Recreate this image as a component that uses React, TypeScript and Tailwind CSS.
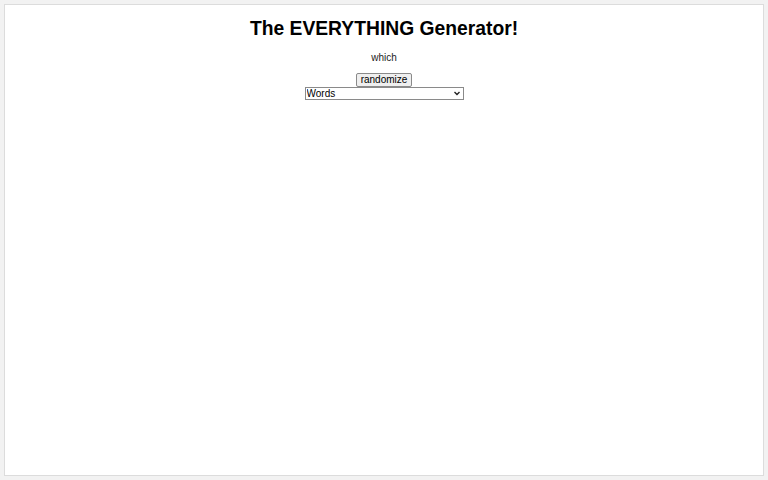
import { useState } from "react";

const categories = ["Words", "Names", "Colors", "Animals", "Places", "Numbers"];

export default function App() {
  const [category, setCategory] = useState("Words");
  const [word, setWord] = useState("which");

  const randomize = () => {
    const pool = ["which", "there", "about", "other", "their", "would"];
    setWord(pool[Math.floor(Math.random() * pool.length)]);
  };

  return (
    <div className="min-h-screen bg-[#f2f2f2] p-[4px] font-['Liberation_Sans',Arial,sans-serif] text-black">
      <div className="h-[472px] bg-white border border-[#dcdcdc] flex flex-col items-center">
        <h1 className="mt-[12px] text-[19.3px] leading-[24px] font-bold">The EVERYTHING Generator!</h1>
        <p className="mt-[11px] text-[10px] leading-[12px] text-[#222]">{word}</p>
        <button
          onClick={randomize}
          className="mt-[9px] h-[14px] px-[4px] text-[10px] leading-[12px] bg-[#efefef] border border-[#8a8a8a] rounded-[2px]"
        >
          randomize
        </button>
        <div className="relative">
          <select
            value={category}
            onChange={(e) => setCategory(e.target.value)}
            className="block w-[159px] h-[13px] pl-[1px] text-[10px] leading-[11px] border border-[#8a8a8a] bg-white appearance-none"
          >
            {categories.map((c) => (
              <option key={c}>{c}</option>
            ))}
          </select>
          <svg
            className="pointer-events-none absolute right-[4px] top-[4px]"
            width="6"
            height="5"
            viewBox="0 0 6 5"
          >
            <path d="M0.5 1 L3 3.5 L5.5 1" fill="none" stroke="#222" strokeWidth="1.4" />
          </svg>
        </div>
      </div>
    </div>
  );
}
